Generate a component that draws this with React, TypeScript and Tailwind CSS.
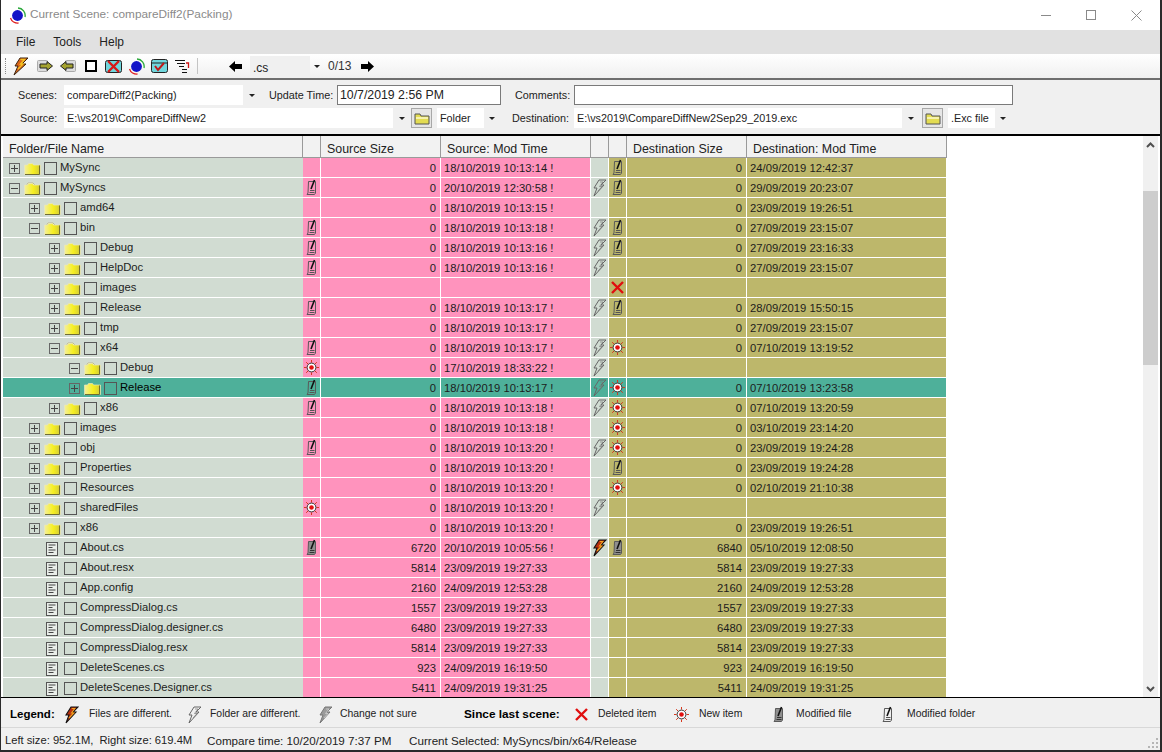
import React from "react";

type Ic = "" | "mf" | "mfile" | "ns" | "fd" | "new" | "x";
type Row = {
  n: string; l: number; t: "+" | "-" | "f";
  a: Ic; ss: string; st: string; b: Ic; c: Ic; ds: string; dt: string; sel?: boolean;
};

const r = (n: string, l: number, t: "+" | "-" | "f", a: Ic, ss: string, st: string, b: Ic, c: Ic, ds: string, dt: string, sel?: boolean): Row => ({ n, l, t, a, ss, st, b, c, ds, dt, sel });

const rows: Row[] = [
  r("MySync", 0, "+", "", "0", "18/10/2019 10:13:14 !", "", "mf", "0", "24/09/2019 12:42:37"),
  r("MySyncs", 0, "-", "mf", "0", "20/10/2019 12:30:58 !", "ns", "mf", "0", "29/09/2019 20:23:07"),
  r("amd64", 1, "+", "", "0", "18/10/2019 10:13:15 !", "", "", "0", "23/09/2019 19:26:51"),
  r("bin", 1, "-", "mf", "0", "18/10/2019 10:13:18 !", "ns", "mf", "0", "27/09/2019 23:15:07"),
  r("Debug", 2, "+", "mf", "0", "18/10/2019 10:13:16 !", "ns", "mf", "0", "27/09/2019 23:16:33"),
  r("HelpDoc", 2, "+", "mf", "0", "18/10/2019 10:13:16 !", "ns", "", "0", "27/09/2019 23:15:07"),
  r("images", 2, "+", "", "", "", "", "x", "", ""),
  r("Release", 2, "+", "mf", "0", "18/10/2019 10:13:17 !", "ns", "mf", "0", "28/09/2019 15:50:15"),
  r("tmp", 2, "+", "", "0", "18/10/2019 10:13:17 !", "", "", "0", "27/09/2019 23:15:07"),
  r("x64", 2, "-", "mf", "0", "18/10/2019 10:13:17 !", "ns", "new", "0", "07/10/2019 13:19:52"),
  r("Debug", 3, "-", "new", "0", "17/10/2019 18:33:22 !", "ns", "", "", ""),
  r("Release", 3, "+", "mf", "0", "18/10/2019 10:13:17 !", "ns", "new", "0", "07/10/2019 13:23:58", true),
  r("x86", 2, "+", "mf", "0", "18/10/2019 10:13:18 !", "ns", "new", "0", "07/10/2019 13:20:59"),
  r("images", 1, "+", "", "0", "18/10/2019 10:13:18 !", "", "new", "0", "03/10/2019 23:14:20"),
  r("obj", 1, "+", "mf", "0", "18/10/2019 10:13:20 !", "ns", "new", "0", "23/09/2019 19:24:28"),
  r("Properties", 1, "+", "", "0", "18/10/2019 10:13:20 !", "", "mf", "0", "23/09/2019 19:24:28"),
  r("Resources", 1, "+", "", "0", "18/10/2019 10:13:20 !", "", "new", "0", "02/10/2019 21:10:38"),
  r("sharedFiles", 1, "+", "new", "0", "18/10/2019 10:13:20 !", "ns", "", "", ""),
  r("x86", 1, "+", "", "0", "18/10/2019 10:13:20 !", "", "", "0", "23/09/2019 19:26:51"),
  r("About.cs", 1, "f", "mfile", "6720", "20/10/2019 10:05:56 !", "fd", "mfile", "6840", "05/10/2019 12:08:50"),
  r("About.resx", 1, "f", "", "5814", "23/09/2019 19:27:33", "", "", "5814", "23/09/2019 19:27:33"),
  r("App.config", 1, "f", "", "2160", "24/09/2019 12:53:28", "", "", "2160", "24/09/2019 12:53:28"),
  r("CompressDialog.cs", 1, "f", "", "1557", "23/09/2019 19:27:33", "", "", "1557", "23/09/2019 19:27:33"),
  r("CompressDialog.designer.cs", 1, "f", "", "6480", "23/09/2019 19:27:33", "", "", "6480", "23/09/2019 19:27:33"),
  r("CompressDialog.resx", 1, "f", "", "5814", "23/09/2019 19:27:33", "", "", "5814", "23/09/2019 19:27:33"),
  r("DeleteScenes.cs", 1, "f", "", "923", "24/09/2019 16:19:50", "", "", "923", "24/09/2019 16:19:50"),
  r("DeleteScenes.Designer.cs", 1, "f", "", "5411", "24/09/2019 19:31:25", "", "", "5411", "24/09/2019 19:31:25"),
];

const Bolt = ({ kind }: { kind: "ns" | "fd" | "legendns" }) => {
  if (kind === "fd")
    return (
      <svg width="15" height="18" viewBox="0 0 15 18" className="block shrink-0">
        <path d="M7 1h7L9 6h3L2 17l3-8H2z" fill="#b8300f" stroke="#111" strokeWidth="1.1" />
        <path d="M7.8 2.5h3L7.5 7h2.300L5 12" fill="none" stroke="#f2a21e" strokeWidth="1.1" />
      </svg>
    );
  return (
    <svg width="15" height="18" viewBox="0 0 15 18" className="block shrink-0">
      <path d="M7 1h7L9 6h3L2 17l3-8H2z" fill={kind === "legendns" ? "#9a9a9a" : "none"} stroke={kind === "legendns" ? "#777" : "#666"} strokeWidth="1" />
      <path d="M8 3h3L7.5 7.5H10L6 12" fill="none" stroke={kind === "legendns" ? "#d8d8d8" : "#777"} strokeWidth="0.7" />
    </svg>
  );
};

const ModDoc = ({ filled }: { filled?: boolean }) => (
  <svg width="12" height="17" viewBox="0 0 12 17" className="block shrink-0">
    <path d="M2.500 2.500h7v11.500l-1 1.500h-7.500l1-1.500z" fill={filled ? "#8f8f8f" : "none"} stroke="#5a5a5a" strokeWidth="1" />
    <path d="M5 10L8.500 1" stroke="#111" strokeWidth="1.600" />
    <path d="M4 11.500h4.500M3.500 13.500h5" stroke={filled ? "#333" : "#555"} strokeWidth="1" />
  </svg>
);

const NewIcon = () => (
  <svg width="15" height="15" viewBox="0 0 15 15" className="block shrink-0">
    <path d="M7.5 0v2.5M7.5 12.5V15M0 7.5h2.5M12.5 7.5H15M2.2 2.2l1.8 1.8M11 11l1.8 1.8M12.8 2.2L11 4M4 11l-1.8 1.8" stroke="#d8381e" strokeWidth="1" />
    <circle cx="7.5" cy="7.5" r="4.4" fill="#fff" stroke="#222" strokeWidth="0.9" />
    <circle cx="7.5" cy="7.5" r="2.3" fill="#e01010" />
  </svg>
);

const XIcon = () => (
  <svg width="13" height="13" viewBox="0 0 13 13" className="block shrink-0">
    <path d="M1 1l11 11M12 1L1 12" stroke="#e00f0f" strokeWidth="2.4" />
  </svg>
);

const CellIcon = ({ i }: { i: Ic }) => {
  if (i === "mf") return <ModDoc />;
  if (i === "mfile") return <ModDoc filled />;
  if (i === "ns") return <Bolt kind="ns" />;
  if (i === "fd") return <Bolt kind="fd" />;
  if (i === "new") return <NewIcon />;
  if (i === "x") return <XIcon />;
  return null;
};

const Expander = ({ open }: { open: boolean }) => (
  <svg width="11" height="11" viewBox="0 0 11 11" className="block shrink-0">
    <rect x="0.5" y="0.5" width="10" height="10" fill="none" stroke="#666" />
    <path d={open ? "M2 5.5h7" : "M2 5.5h7M5.5 2v7"} stroke="#444" />
  </svg>
);

const Folder = ({ open, id }: { open: boolean; id: string }) => (
  <svg width="17" height="14" viewBox="0 0 17 14" className="block shrink-0">
    <defs>
      <linearGradient id={id} x1="0" x2="1" y1="0" y2="0">
        <stop offset="0" stopColor="#f4f09a" />
        <stop offset="0.55" stopColor="#f6ef20" />
        <stop offset="1" stopColor="#cfc93a" />
      </linearGradient>
    </defs>
    {open && <path d="M2 4L4 1h5l2 2" fill="#f5f3d0" stroke="#bdb98a" />}
    <path d="M0.5 3h3l1-1.500h4l1 1.500h7v9.500H0.500z" fill={`url(#${id})`} stroke="#e8e6c0" strokeWidth="0.7" />
    <path d="M15.5 3.500v9H1" fill="none" stroke="#6f6c34" strokeWidth="1" />
  </svg>
);

const Check = () => <span className="block w-[13px] h-[13px] shrink-0 border border-[#555] bg-transparent" />;

const FileIc = () => (
  <svg width="12" height="14" viewBox="0 0 12 14" className="block shrink-0">
    <rect x="0.5" y="0.5" width="11" height="13" fill="#e9eee9" stroke="#555" />
    <path d="M2.5 3h7M2.5 5.5h4M2.5 8h7M2.5 10.5h5" stroke="#444" />
  </svg>
);

const TreeCell = ({ row, idx }: { row: Row; idx: number }) => {
  const indent = ["pl-[6px]", "pl-[26px]", "pl-[46px]", "pl-[66px]"][row.l];
  return (
    <div className={`flex items-center h-full ${indent} ${row.sel ? "bg-[#4eb09a]" : "bg-[#d1dcd2]"}`}>
      {row.t === "f" ? (
        <>
          <span className="ml-[17px] mt-[2px]"><FileIc /></span>
          <span className="ml-[6px] mt-[2px]"><Check /></span>
        </>
      ) : (
        <>
          <span className="mt-[2px]"><Expander open={row.t === "-"} /></span>
          <span className="ml-[4px] mt-[2px]"><Folder open={row.t === "-"} id={`fg${idx}`} /></span>
          <span className="ml-[3px] mt-[2px]"><Check /></span>
        </>
      )}
      <span className={`ml-[3px] mt-px whitespace-nowrap ${row.sel ? "text-black" : "text-[#1c1c1c]"}`}>{row.n}</span>
    </div>
  );
};

const DataRow = ({ row, idx }: { row: Row; idx: number }) => {
  const pink = row.sel ? "bg-[#4eb09a]" : "bg-[#ff93bd]";
  const olive = row.sel ? "bg-[#4eb09a]" : "bg-[#bdb76b]";
  const grey = row.sel ? "bg-[#4eb09a]" : "bg-[#d1dcd2]";
  const cell = "h-full border-r border-white flex items-center";
  return (
    <div className="grid grid-cols-[300px_18px_120px_150px_18px_18px_120px_200px] h-5 border-b border-white w-[944px] text-[11.250px]">
      <TreeCell row={row} idx={idx} />
      <div className={`${cell} ${pink} justify-center`}><CellIcon i={row.a} /></div>
      <div className={`${cell} ${pink} justify-end pr-[4px] pt-[3px]`}>{row.ss}</div>
      <div className={`${cell} ${pink} pl-[3px] pt-[3px]`}>{row.st}</div>
      <div className={`${cell} ${grey} justify-center`}><CellIcon i={row.b} /></div>
      <div className={`${cell} ${olive} justify-center`}><CellIcon i={row.c} /></div>
      <div className={`${cell} ${olive} justify-end pr-[4px] pt-[3px]`}>{row.ds}</div>
      <div className={`${cell} ${olive} pl-[3px] pt-[3px]`}>{row.dt}</div>
    </div>
  );
};

const Caret = () => <span className="block w-0 h-0 border-l-[3px] border-r-[3px] border-t-[3px] border-l-transparent border-r-transparent border-t-[#222]" />;

const Combo = ({ w, text, btn = 17 }: { w: string; text: string; btn?: number }) => (
  <div className={`flex items-center h-[20px] bg-white shrink-0 ${w}`}>
    <span className="flex-1 pl-[3px] whitespace-nowrap overflow-hidden leading-[16px] text-[#222]">{text}</span>
    <span className={`h-full flex items-center justify-center bg-[#f0f0f0] ${btn === 17 ? "w-[17px]" : "w-[16px]"}`}><Caret /></span>
  </div>
);

const FolderBtn = () => (
  <span className="w-[21px] h-[20px] shrink-0 border border-[#a8a8a8] bg-[#e6e6e6] flex items-center justify-center">
    <svg width="16" height="13" viewBox="0 0 16 13" className="block">
      <path d="M1 12V2h5l1 2h8v8z" fill="#e3dc52" stroke="#555" />
      <path d="M2 5h12v2H2z" fill="#f6f2b0" />
    </svg>
  </span>
);

const ToolIcons = () => (
  <>
    <svg width="17" height="19" viewBox="0 0 17 19" className="ml-[6px] shrink-0">
      <path d="M8 1h8L10 7h4L2 18l4-9H3z" fill="#d9641a" stroke="#3a2410" />
      <path d="M8.5 2.5h4L8.5 7h2.5L6 12" fill="none" stroke="#f6c21e" strokeWidth="1.4" />
    </svg>
    <svg width="16" height="14" viewBox="0 0 16 14" className="ml-[8px] shrink-0">
      <rect x="0.5" y="1.5" width="10" height="11" rx="1" fill="#dcdcdc" stroke="#aaa" />
      <path d="M3 5h7V2.5L15.5 7 10 11.5V9H3z" fill="#a5a32f" stroke="#222" />
    </svg>
    <svg width="16" height="14" viewBox="0 0 16 14" className="ml-[7px] shrink-0">
      <rect x="5.5" y="1.5" width="10" height="11" rx="1" fill="#dcdcdc" stroke="#aaa" />
      <path d="M13 5H6V2.500L0.5 7 6 11.5V9h7z" fill="#a5a32f" stroke="#222" />
    </svg>
    <span className="ml-[9px] w-[12px] h-[12px] border-2 border-black bg-white shrink-0" />
    <svg width="17" height="15" viewBox="0 0 17 15" className="ml-[8px] shrink-0">
      <rect x="0.5" y="1.500" width="16" height="12" rx="2" fill="#6fd6dc" stroke="#222" />
      <path d="M3 2l11 11M14 2L3 13" stroke="#d81818" strokeWidth="2.4" />
    </svg>
    <svg width="17" height="17" viewBox="0 0 17 17" className="ml-[6px] shrink-0">
      <circle cx="8.500" cy="8.500" r="5.400" fill="#1414c8" />
      <path d="M9 1a7.500 7.500 0 0 1 7 9" fill="none" stroke="#2aa83a" strokeWidth="1.300" />
      <path d="M1.500 11a7.500 7.500 0 0 0 8 5" fill="none" stroke="#e02020" strokeWidth="1.300" />
    </svg>
    <svg width="17" height="16" viewBox="0 0 17 16" className="ml-[6px] shrink-0">
      <rect x="0.500" y="1.500" width="16" height="13" rx="2" fill="#6fd6dc" stroke="#222" />
      <path d="M0.500 5h16" stroke="#222" />
      <path d="M4 8l3 4 6-7" fill="none" stroke="#c01818" strokeWidth="2" />
    </svg>
    <svg width="15" height="15" viewBox="0 0 15 15" className="ml-[7px] shrink-0">
      <path d="M0 1.500h10M2 4.500h8M4 7.500h5M7 10.500h5M7 13.500h5" stroke="#111" />
      <path d="M11 4h2.500v5" fill="none" stroke="#d01818" strokeWidth="1.300" />
    </svg>
  </>
);

const FatArrow = ({ left }: { left?: boolean }) => (
  <svg width="13" height="11" viewBox="0 0 13 11" className="block shrink-0">
    <path d={left ? "M0 5.500L6 0v3h7v5H6v3z" : "M13 5.500L7 0v3H0v5h7v3z"} fill="#000" />
  </svg>
);

const LegendText = ({ children, cls }: { children: React.ReactNode; cls: string }) => (
  <span className={`whitespace-nowrap ${cls}`}>{children}</span>
);

export default function App() {
  return (
    <div className="w-[1162px] h-[752px] overflow-hidden flex flex-col bg-white border-l border-r-2 border-b-2 border-[#2a2a2a] font-['Liberation_Sans',Arial,sans-serif] text-[12px] leading-none text-[#1c1c1c]">
      {/* title bar */}
      <div className="h-[30px] shrink-0 flex items-center bg-white">
        <svg width="17" height="17" viewBox="0 0 17 17" className="ml-[8px] shrink-0">
          <circle cx="8.500" cy="8.500" r="5.400" fill="#1414c8" />
          <path d="M9 1a7.500 7.500 0 0 1 7 9" fill="none" stroke="#2aa83a" strokeWidth="1.300" />
          <path d="M1.500 11a7.500 7.500 0 0 0 8 5" fill="none" stroke="#e02020" strokeWidth="1.300" />
        </svg>
        <span className="ml-[4px] text-[11.800px] text-[#8a8a8a] whitespace-nowrap">Current Scene: compareDiff2(Packing)</span>
        <div className="ml-auto flex items-center gap-[35px] pr-[18px]">
          <span className="w-[10px] h-px bg-[#8a8a8a]" />
          <span className="w-[10px] h-[10px] border border-[#8a8a8a]" />
          <svg width="11" height="11" viewBox="0 0 11 11"><path d="M0.500 0.500l10 10M10.500 0.500l-10 10" stroke="#8a8a8a" /></svg>
        </div>
      </div>
      {/* menu */}
      <div className="h-[24px] shrink-0 flex items-center bg-[#e1e1e1] pl-[15px] gap-[18px] text-[12px] text-[#222]">
        <span>File</span><span>Tools</span><span>Help</span>
      </div>
      {/* toolbar */}
      <div className="h-[26px] shrink-0 flex items-center bg-gradient-to-b from-white to-[#f0f0f0] border-b-2 border-[#6e6e6e]">
        <span className="ml-[4px] w-px h-[16px] border-l border-dotted border-[#888]" />
        <ToolIcons />
        <span className="ml-[7px] w-px h-[16px] bg-[#c4c4c4]" />
        <span className="ml-[31px]"><FatArrow left /></span>
        <span className="ml-[8px] w-[60px] h-[21px] bg-[#f0f0f0] pl-[3px] flex items-center pt-[3px]">.cs</span>
        <span className="ml-[4px]"><Caret /></span>
        <span className="ml-[8px] text-[#333]">0/13</span>
        <span className="ml-[10px]"><FatArrow /></span>
      </div>
      {/* scene panel */}
      <div className="h-[56px] shrink-0 bg-[#f0f0f0] border-b-2 border-black flex flex-col text-[#222] text-[10.800px]">
        <div className="flex items-center mt-[5px] h-[20px]">
          <span className="ml-[16px] w-[40px] pl-px">Scenes:</span>
          <Combo w="w-[196px] ml-[7px]" text="compareDiff2(Packing)" />
          <span className="ml-[9px] w-[64px] whitespace-nowrap">Update Time:</span>
          <span className="ml-[4px] w-[164px] h-[20px] border border-[#7a7a7a] bg-white flex items-center pl-[2px] text-[12.300px]">10/7/2019 2:56 PM</span>
          <span className="ml-[14px] w-[54px]">Comments:</span>
          <span className="ml-[5px] w-[439px] h-[20px] border border-[#7a7a7a] bg-white" />
        </div>
        <div className="flex items-center mt-[3px] h-[20px]">
          <span className="ml-[18px] w-[38px] pl-px">Source:</span>
          <Combo w="w-[346px] ml-[7px]" text="E:\vs2019\CompareDiffNew2" />
          <span className="ml-[1px]"><FolderBtn /></span>
          <Combo w="w-[63px] ml-[5px]" text="Folder" btn={13} />
          <span className="ml-[12px] w-[56px] whitespace-nowrap">Destination:</span>
          <Combo w="w-[345px] ml-[6px]" text="E:\vs2019\CompareDiffNew2Sep29_2019.exc" />
          <span className="ml-[3px]"><FolderBtn /></span>
          <Combo w="w-[63px] ml-[5px]" text=".Exc file" btn={13} />
        </div>
      </div>
      {/* table */}
      <div className="flex-1 min-h-0 flex bg-white overflow-hidden">
        <div className="flex-1 min-w-0 pl-[2px] overflow-hidden">
          <div className="grid grid-cols-[300px_18px_120px_150px_18px_18px_120px_200px] w-[944px] h-[22px] bg-[#f2f2f2] border-b border-[#9a9a9a] text-[12.400px] text-[#222]">
            <div className="border-r border-[#9a9a9a] pl-[6px] pt-[7px]">Folder/File Name</div>
            <div className="border-r border-[#9a9a9a]" />
            <div className="border-r border-[#9a9a9a] pl-[6px] pt-[7px]">Source Size</div>
            <div className="border-r border-[#9a9a9a] pl-[6px] pt-[7px]">Source: Mod Time</div>
            <div className="border-r border-[#9a9a9a]" />
            <div className="border-r border-[#9a9a9a]" />
            <div className="border-r border-[#9a9a9a] pl-[6px] pt-[7px]">Destination Size</div>
            <div className="border-r border-[#9a9a9a] pl-[6px] pt-[7px]">Destination: Mod Time</div>
          </div>
          {rows.map((row, i) => <DataRow key={i} row={row} idx={i} />)}
        </div>
        <div className="w-[15px] shrink-0 bg-[#f0f0f0] flex flex-col items-center mr-[2px]">
          <svg width="9" height="6" viewBox="0 0 9 6" className="block mt-[6px] mb-[43px]"><path d="M1 5l3.500-3.500L8 5" fill="none" stroke="#505050" strokeWidth="2" /></svg>
          <div className="w-full h-[174px] bg-[#cdcdcd]" />
          <svg width="9" height="6" viewBox="0 0 9 6" className="block mt-auto mb-[5px]"><path d="M1 1l3.500 3.500L8 1" fill="none" stroke="#505050" strokeWidth="2" /></svg>
        </div>
      </div>
      {/* legend */}
      <div className="h-[31px] shrink-0 bg-[#f0f0f0] border-t border-black border-b border-b-[#d8d8d8] flex items-center pt-[4px] text-[10.400px] text-[#222]">
        <LegendText cls="ml-[9px] w-[47px] font-bold text-black text-[11.500px]">Legend:</LegendText>
        <span className="ml-[7px]"><Bolt kind="fd" /></span>
        <LegendText cls="ml-[10px] w-[83px]">Files are different.</LegendText>
        <span className="ml-[15px]"><Bolt kind="ns" /></span>
        <LegendText cls="ml-[8px] w-[90px]">Folder are different.</LegendText>
        <span className="ml-[18px]"><Bolt kind="legendns" /></span>
        <LegendText cls="ml-[7px] w-[79px]">Change not sure</LegendText>
        <LegendText cls="ml-[45px] w-[97px] font-bold text-black text-[11.800px]">Since last scene:</LegendText>
        <span className="ml-[14px]"><XIcon /></span>
        <LegendText cls="ml-[10px] w-[58px]">Deleted item</LegendText>
        <span className="ml-[18px]"><NewIcon /></span>
        <LegendText cls="ml-[10px] w-[45px]">New item</LegendText>
        <span className="ml-[29px]"><ModDoc filled /></span>
        <LegendText cls="ml-[11px] w-[55px]">Modified file</LegendText>
        <span className="ml-[31px]"><ModDoc /></span>
        <LegendText cls="ml-[13px]">Modified folder</LegendText>
      </div>
      {/* status bar */}
      <div className="h-[22px] shrink-0 bg-[#f0f0f0] flex items-center pt-[3px] text-[11.650px] text-[#222]">
        <span className="ml-[4px] w-[190px] whitespace-pre text-[11.200px]">Left size: 952.1M,  Right size: 619.4M</span>
        <span className="ml-[12px] w-[185px] whitespace-nowrap">Compare time: 10/20/2019 7:37 PM</span>
        <span className="ml-[17px] whitespace-nowrap">Current Selected: MySyncs/bin/x64/Release</span>
        <svg width="12" height="12" viewBox="0 0 12 12" className="ml-auto mr-[1px] self-end mb-px">
          <path d="M9 1h2v2H9zM5 5h2v2H5zM9 5h2v2H9zM1 9h2v2H1zM5 9h2v2H5zM9 9h2v2H9z" fill="#b5b5b5" />
        </svg>
      </div>
    </div>
  );
}
